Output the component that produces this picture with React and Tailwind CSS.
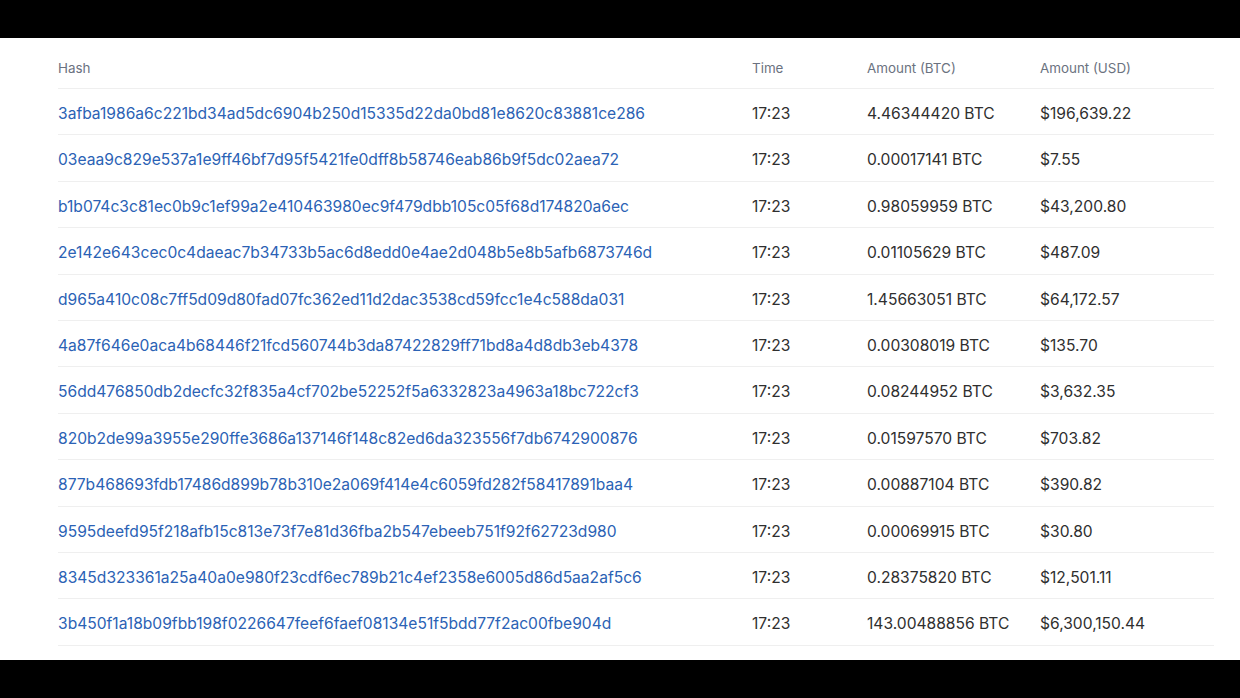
import React from 'react';

const txs = [
  ['3afba1986a6c221bd34ad5dc6904b250d15335d22da0bd81e8620c83881ce286', '17:23', '4.46344420 BTC', '$196,639.22'],
  ['03eaa9c829e537a1e9ff46bf7d95f5421fe0dff8b58746eab86b9f5dc02aea72', '17:23', '0.00017141 BTC', '$7.55'],
  ['b1b074c3c81ec0b9c1ef99a2e410463980ec9f479dbb105c05f68d174820a6ec', '17:23', '0.98059959 BTC', '$43,200.80'],
  ['2e142e643cec0c4daeac7b34733b5ac6d8edd0e4ae2d048b5e8b5afb6873746d', '17:23', '0.01105629 BTC', '$487.09'],
  ['d965a410c08c7ff5d09d80fad07fc362ed11d2dac3538cd59fcc1e4c588da031', '17:23', '1.45663051 BTC', '$64,172.57'],
  ['4a87f646e0aca4b68446f21fcd560744b3da87422829ff71bd8a4d8db3eb4378', '17:23', '0.00308019 BTC', '$135.70'],
  ['56dd476850db2decfc32f835a4cf702be52252f5a6332823a4963a18bc722cf3', '17:23', '0.08244952 BTC', '$3,632.35'],
  ['820b2de99a3955e290ffe3686a137146f148c82ed6da323556f7db6742900876', '17:23', '0.01597570 BTC', '$703.82'],
  ['877b468693fdb17486d899b78b310e2a069f414e4c6059fd282f58417891baa4', '17:23', '0.00887104 BTC', '$390.82'],
  ['9595deefd95f218afb15c813e73f7e81d36fba2b547ebeeb751f92f62723d980', '17:23', '0.00069915 BTC', '$30.80'],
  ['8345d323361a25a40a0e980f23cdf6ec789b21c4ef2358e6005d86d5aa2af5c6', '17:23', '0.28375820 BTC', '$12,501.11'],
  ['3b450f1a18b09fbb198f0226647feef6faef08134e51f5bdd77f2ac00fbe904d', '17:23', '143.00488856 BTC', '$6,300,150.44'],
];

const App = () => {
  return (
    <div className="w-[1240px] h-[698px] bg-black flex flex-col" style={{ fontFamily: 'Inter, "Noto Sans", sans-serif' }}>
      <div className="h-[38px] bg-black" />

      {/* table */}
      <div className="h-[622px] bg-white pt-[10px] pl-[58px] pr-[26px]">
        <div className="grid grid-cols-[694px_115px_173px_1fr] h-[41px] items-center border-b border-[#efefef] text-[13.4px] text-[#6b7280]">
          <div>Hash</div>
          <div>Time</div>
          <div>Amount (BTC)</div>
          <div>Amount (USD)</div>
        </div>
        {txs.map((t) => (
          <div key={t[0]} className="grid grid-cols-[694px_115px_173px_1fr] h-[46.4px] items-center pt-[4px] border-b border-[#efefef] text-[15.6px] text-[#2f2f2f]">
            <a href="#" className="text-[#2b62b5]">{t[0]}</a>
            <div>{t[1]}</div>
            <div>{t[2]}</div>
            <div>{t[3]}</div>
          </div>
        ))}
      </div>

      <div className="flex-1 bg-black" />
    </div>
  );
};

export default App;
